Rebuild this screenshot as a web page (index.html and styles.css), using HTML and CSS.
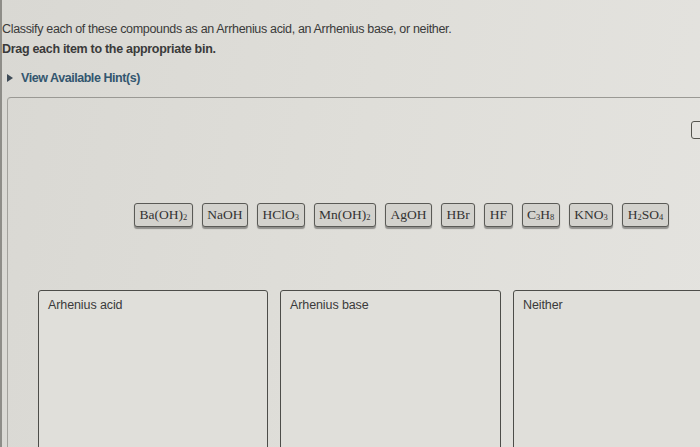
FILE: index.html
```html
<!DOCTYPE html>
<html>
<head>
<meta charset="utf-8">
<link rel="stylesheet" href="styles.css">
</head>
<body>
<div class="page">
  <p class="question">Classify each of these compounds as an Arrhenius acid, an Arrhenius base, or neither.</p>
  <p class="instruction">Drag each item to the appropriate bin.</p>
  <div class="hint"><span class="tri"></span><span class="hint-text">View Available Hint(s)</span></div>
  <div class="panel">
    <div class="reset"></div>
    <div class="items">
      <span class="item">Ba(OH)<sub>2</sub></span>
      <span class="item">NaOH</span>
      <span class="item">HClO<sub>3</sub></span>
      <span class="item">Mn(OH)<sub>2</sub></span>
      <span class="item">AgOH</span>
      <span class="item">HBr</span>
      <span class="item">HF</span>
      <span class="item">C<sub>3</sub>H<sub>8</sub></span>
      <span class="item">KNO<sub>3</sub></span>
      <span class="item">H<sub>2</sub>SO<sub>4</sub></span>
    </div>
    <div class="bins">
      <div class="bin bin-acid"><span class="bin-label">Arhenius acid</span></div>
      <div class="bin bin-base"><span class="bin-label">Arhenius base</span></div>
      <div class="bin bin-neither"><span class="bin-label">Neither</span></div>
    </div>
  </div>
</div>
</body>
</html>
```
FILE: styles.css
```css
html, body {
  margin: 0;
  padding: 0;
  width: 700px;
  height: 447px;
  overflow: hidden;
}
body {
  background: linear-gradient(100deg, #d9d8d3 0%, #dfded9 50%, #e4e3df 100%);
  font-family: "Liberation Sans", Arial, sans-serif;
  color: #3a3a3a;
}
.page {
  position: relative;
  height: 447px;
  border-left: 2px solid #8e8d88;
  box-sizing: border-box;
  overflow: hidden;
}
.question {
  margin: 0;
  padding-top: 22px;
  font-size: 12.5px;
  line-height: 15px;
  letter-spacing: -0.33px;
}
.instruction {
  margin: 0;
  padding-top: 5px;
  font-size: 12.5px;
  line-height: 15px;
  font-weight: bold;
  letter-spacing: -0.3px;
}
.hint {
  display: flex;
  align-items: center;
  gap: 8px;
  margin-top: 13px;
  padding-left: 5px;
  height: 15px;
}
.tri {
  width: 0;
  height: 0;
  border-top: 4px solid transparent;
  border-bottom: 4px solid transparent;
  border-left: 6px solid #3e4b57;
}
.hint-text {
  font-size: 12.5px;
  font-weight: bold;
  color: #33566f;
  letter-spacing: -0.45px;
}
.panel {
  position: relative;
  margin-top: 12px;
  margin-left: 5px;
  width: 760px;
  height: 400px;
  border-top: 1px solid #9a9994;
  border-left: 1px solid #a3a29d;
  border-radius: 4px 0 0 0;
  box-sizing: border-box;
}
.reset {
  position: absolute;
  left: 683px;
  top: 23px;
  width: 16px;
  height: 16px;
  border: 1.5px solid #55554f;
  border-radius: 3px;
  background: #e6e5e1;
}
.items {
  display: flex;
  gap: 9px;
  padding-left: 126px;
  padding-top: 105px;
}
.item {
  display: inline-block;
  height: 22px;
  line-height: 22px;
  padding: 0 4.5px;
  border: 1.5px solid #5a5a56;
  border-radius: 3px;
  background: #d3d2cd;
  box-shadow: 0 1.5px 1px rgba(0, 0, 0, 0.35);
  font-family: "Liberation Serif", "Times New Roman", serif;
  font-size: 13.5px;
  color: #333;
  white-space: nowrap;
}
.item sub {
  font-size: 8.5px;
  vertical-align: -1px;
  line-height: 0;
}
.bins {
  display: flex;
  gap: 12px;
  padding-left: 30px;
  margin-top: 63px;
}
.bin {
  height: 200px;
  border: 1.5px solid #4d4d49;
  border-radius: 3px;
  background: #e0dfda;
  box-sizing: border-box;
  padding: 4px 9px;
}
.bin-acid { width: 230px; }
.bin-base { width: 221px; }
.bin-neither { width: 230px; }
.bin-label {
  font-size: 12.5px;
  color: #3a3a3a;
  letter-spacing: -0.1px;
}
```
